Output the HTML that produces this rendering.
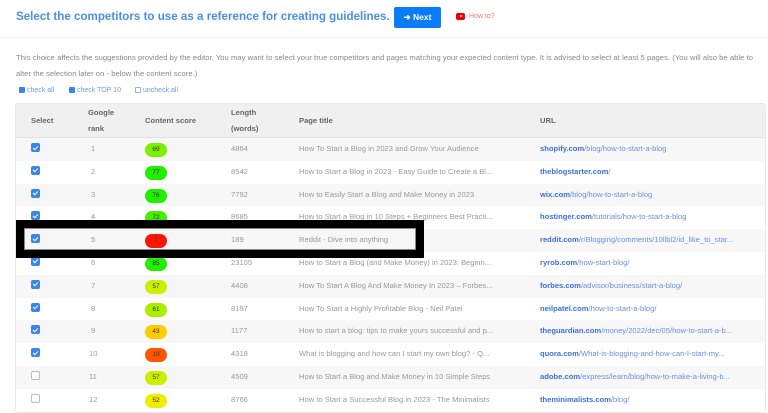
<!DOCTYPE html>
<html><head><meta charset="utf-8"><style>
*{margin:0;padding:0;box-sizing:border-box}
body{width:768px;height:406px;overflow:hidden;background:#fff;font-family:"Liberation Sans",sans-serif;position:relative}
.top{position:absolute;left:0;top:0;width:768px;height:38px;background:#fff;border-bottom:1px solid #f3f3f3}
h1{position:absolute;left:16px;top:10px;font-size:11.6px;font-weight:bold;color:#4a8fe6;white-space:nowrap}
.btn{position:absolute;left:394px;top:7px;width:47px;height:21px;background:#0a7cf7;border-radius:2px;color:#fff;font-size:8.5px;font-weight:bold;line-height:21px;text-align:center}
.yt{position:absolute;left:456px;top:13px;width:9px;height:7px;background:#e00;border-radius:2px}
.yt:after{content:"";position:absolute;left:3.5px;top:1.8px;border-left:3px solid #fff;border-top:1.7px solid transparent;border-bottom:1.7px solid transparent}
.how{position:absolute;left:469px;top:13px;font-size:7px;color:#f47a7a}
.desc{position:absolute;left:16px;top:50px;width:742px;font-size:7.6px;color:#888;line-height:16px;letter-spacing:0.05px}
.ck{position:absolute;top:87px;font-size:7px;color:#6a9be8}
.ck i{display:inline-block;width:6px;height:6px;background:#3a86e8;border-radius:1px;vertical-align:-1px;margin-right:2px}
.ck i.e{background:#fff;border:1px solid #8fb3ec}
.tbl{position:absolute;left:15px;top:103px;width:751px;height:310px;border:1px solid #e8e8e8;border-radius:3px;overflow:hidden}
.hd{height:34px;background:#f0f0f0;border-bottom:1px solid #e2e2e2;position:relative;font-size:7.6px;color:#666;font-weight:bold}
.hd span{position:absolute;line-height:16px}
.row{height:22.8px;position:relative;font-size:7.6px;color:#999}
.row:nth-child(even){background:#f7f7f7}
.row span{position:absolute;top:0;line-height:22.8px;white-space:nowrap}
.cb{position:absolute;left:15px;top:5px;width:9px;height:9px;background:#3a86e8;border-radius:2px}
.cb:after{content:"";position:absolute;left:3px;top:1.5px;width:2px;height:4px;border:solid #fff;border-width:0 1.2px 1.2px 0;transform:rotate(45deg)}
.cb.e{background:#fff;border:1px solid #bbb}
.cb.e:after{display:none}
.pill{position:absolute;left:129px;top:5px;width:22px;height:14px;border-radius:7px;font-size:6.5px;color:#333;text-align:center;line-height:14px;font-style:normal}
.u{color:#6a8fe0}.u b{color:#3d6fd8}
.box{position:absolute;left:16px;top:220px;width:408px;height:38px;border:8px solid #000}
.box:before{content:"";position:absolute;inset:0;border:1px solid #888}
</style></head><body>
<div class="top"></div>
<h1>Select the competitors to use as a reference for creating guidelines.</h1>
<div class="btn">➜ Next</div>
<div class="yt"></div><div class="how">How to?</div>
<div class="desc">This choice affects the suggestions provided by the editor. You may want to select your true competitors and pages matching your expected content type. It is advised to select at least 5 pages. (You will also be able to alter the selection later on - below the content score.)</div>
<div class="ck" style="left:19px"><i></i>check all</div>
<div class="ck" style="left:69px"><i></i>check TOP 10</div>
<div class="ck" style="left:135px"><i class="e"></i>uncheck all</div>
<div class="tbl">
<div class="hd"><span style="left:15px;top:9px">Select</span><span style="left:72px;top:1px">Google<br>rank</span><span style="left:129px;top:9px">Content score</span><span style="left:215px;top:1px">Length<br>(words)</span><span style="left:283px;top:9px">Page title</span><span style="left:524px;top:9px">URL</span></div>
<div class="row"><i class="cb"></i><span style="left:75px">1</span><i class="pill" style="background:#7cf000">69</i><span style="left:215px">4864</span><span style="left:283px">How To Start a Blog in 2023 and Grow Your Audience</span><span class="u" style="left:524px"><b>shopify.com</b>/blog/how-to-start-a-blog</span></div>
<div class="row"><i class="cb"></i><span style="left:75px">2</span><i class="pill" style="background:#22ee00">77</i><span style="left:215px">8542</span><span style="left:283px">How to Start a Blog in 2023 - Easy Guide to Create a Bl...</span><span class="u" style="left:524px"><b>theblogstarter.com</b>/</span></div>
<div class="row"><i class="cb"></i><span style="left:75px">3</span><i class="pill" style="background:#22ee00">76</i><span style="left:215px">7792</span><span style="left:283px">How to Easily Start a Blog and Make Money in 2023</span><span class="u" style="left:524px"><b>wix.com</b>/blog/how-to-start-a-blog</span></div>
<div class="row"><i class="cb"></i><span style="left:75px">4</span><i class="pill" style="background:#44ee00">72</i><span style="left:215px">8685</span><span style="left:283px">How to Start a Blog in 10 Steps + Beginners Best Practi...</span><span class="u" style="left:524px"><b>hostinger.com</b>/tutorials/how-to-start-a-blog</span></div>
<div class="row"><i class="cb"></i><span style="left:75px">5</span><i class="pill" style="background:#ff1500">7</i><span style="left:215px">189</span><span style="left:283px">Reddit - Dive into anything</span><span class="u" style="left:524px"><b>reddit.com</b>/r/Blogging/comments/10llbl2/id_like_to_star...</span></div>
<div class="row"><i class="cb"></i><span style="left:75px">6</span><i class="pill" style="background:#22ee00">85</i><span style="left:215px">23105</span><span style="left:283px">How to Start a Blog (and Make Money) in 2023: Beginn...</span><span class="u" style="left:524px"><b>ryrob.com</b>/how-start-blog/</span></div>
<div class="row"><i class="cb"></i><span style="left:75px">7</span><i class="pill" style="background:#ccee00">57</i><span style="left:215px">4408</span><span style="left:283px">How To Start A Blog And Make Money In 2023 – Forbes...</span><span class="u" style="left:524px"><b>forbes.com</b>/advisor/business/start-a-blog/</span></div>
<div class="row"><i class="cb"></i><span style="left:75px">8</span><i class="pill" style="background:#aaee00">61</i><span style="left:215px">8197</span><span style="left:283px">How To Start a Highly Profitable Blog - Neil Patel</span><span class="u" style="left:524px"><b>neilpatel.com</b>/how-to-start-a-blog/</span></div>
<div class="row"><i class="cb"></i><span style="left:75px">9</span><i class="pill" style="background:#ffcc00">43</i><span style="left:215px">1177</span><span style="left:283px">How to start a blog: tips to make yours successful and p...</span><span class="u" style="left:524px"><b>theguardian.com</b>/money/2022/dec/05/how-to-start-a-b...</span></div>
<div class="row"><i class="cb"></i><span style="left:73px">10</span><i class="pill" style="background:#ff5500">19</i><span style="left:215px">4318</span><span style="left:283px">What is blogging and how can I start my own blog? - Q...</span><span class="u" style="left:524px"><b>quora.com</b>/What-is-blogging-and-how-can-I-start-my...</span></div>
<div class="row"><i class="cb e"></i><span style="left:73px">11</span><i class="pill" style="background:#ccee00">57</i><span style="left:215px">4509</span><span style="left:283px">How to Start a Blog and Make Money in 10 Simple Steps</span><span class="u" style="left:524px"><b>adobe.com</b>/express/learn/blog/how-to-make-a-living-b...</span></div>
<div class="row"><i class="cb e"></i><span style="left:73px">12</span><i class="pill" style="background:#eeee00">52</i><span style="left:215px">8766</span><span style="left:283px">How to Start a Successful Blog in 2023 - The Minimalists</span><span class="u" style="left:524px"><b>theminimalists.com</b>/blog/</span></div>
</div>
<div class="box"></div>
</body></html>
